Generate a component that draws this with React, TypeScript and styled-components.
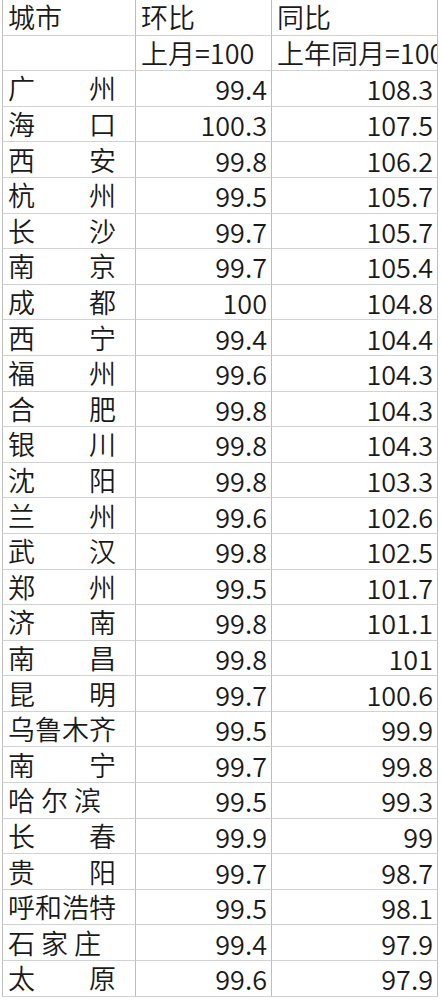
import styled, { createGlobalStyle } from "styled-components";

type Row = { city: string; mom: string; yoy: string };

const rows: Row[] = [
  { city: "广　　州", mom: "99.4", yoy: "108.3" },
  { city: "海　　口", mom: "100.3", yoy: "107.5" },
  { city: "西　　安", mom: "99.8", yoy: "106.2" },
  { city: "杭　　州", mom: "99.5", yoy: "105.7" },
  { city: "长　　沙", mom: "99.7", yoy: "105.7" },
  { city: "南　　京", mom: "99.7", yoy: "105.4" },
  { city: "成　　都", mom: "100", yoy: "104.8" },
  { city: "西　　宁", mom: "99.4", yoy: "104.4" },
  { city: "福　　州", mom: "99.6", yoy: "104.3" },
  { city: "合　　肥", mom: "99.8", yoy: "104.3" },
  { city: "银　　川", mom: "99.8", yoy: "104.3" },
  { city: "沈　　阳", mom: "99.8", yoy: "103.3" },
  { city: "兰　　州", mom: "99.6", yoy: "102.6" },
  { city: "武　　汉", mom: "99.8", yoy: "102.5" },
  { city: "郑　　州", mom: "99.5", yoy: "101.7" },
  { city: "济　　南", mom: "99.8", yoy: "101.1" },
  { city: "南　　昌", mom: "99.8", yoy: "101" },
  { city: "昆　　明", mom: "99.7", yoy: "100.6" },
  { city: "乌鲁木齐", mom: "99.5", yoy: "99.9" },
  { city: "南　　宁", mom: "99.7", yoy: "99.8" },
  { city: "哈 尔 滨", mom: "99.5", yoy: "99.3" },
  { city: "长　　春", mom: "99.9", yoy: "99" },
  { city: "贵　　阳", mom: "99.7", yoy: "98.7" },
  { city: "呼和浩特", mom: "99.5", yoy: "98.1" },
  { city: "石 家 庄", mom: "99.4", yoy: "97.9" },
  { city: "太　　原", mom: "99.6", yoy: "97.9" },
];

function App() {
  return (
    <>
      <GlobalStyle />
      <Sheet>
        <Cell>城市</Cell>
        <Cell>环比</Cell>
        <Cell $last>同比</Cell>

        <Cell />
        <Cell>上月=100</Cell>
        <Cell $last>上年同月=100</Cell>

        {rows.map((r) => (
          <Line key={r.city}>
            <Cell>{r.city}</Cell>
            <Cell $num>{r.mom}</Cell>
            <Cell $num $last>
              {r.yoy}
            </Cell>
          </Line>
        ))}
      </Sheet>
    </>
  );
}
export default App;

const GlobalStyle = createGlobalStyle`
  html, body {
    margin: 0;
    padding: 0;
    background: #fff;
  }
  body {
    font-family: "Noto Sans CJK SC", "Noto Sans", sans-serif;
    color: #1a1a1a;
  }
`;

const Sheet = styled.div`
  display: grid;
  grid-template-columns: 133px 136px 167px;
  grid-auto-rows: 35.6px;
  margin-left: 2px;
  width: 436px;
`;

const Line = styled.div`
  display: contents;
`;

const Cell = styled.div<{ $num?: boolean; $last?: boolean }>`
  box-sizing: border-box;
  border-left: 1px solid #bdbdbd;
  border-bottom: 1px solid #d2d2d2;
  border-right: ${(p) => (p.$last ? "1px solid #bdbdbd" : "none")};
  display: flex;
  align-items: center;
  justify-content: ${(p) => (p.$num ? "flex-end" : "flex-start")};
  padding: ${(p) => (p.$num ? "2px 4px 0 5px" : "0 4px 0 5px")};
  font-size: 27px;
  font-weight: 350;
  line-height: 30px;
  white-space: pre;
  overflow-x: ${(p) => (p.$last ? "clip" : "visible")};
`;
